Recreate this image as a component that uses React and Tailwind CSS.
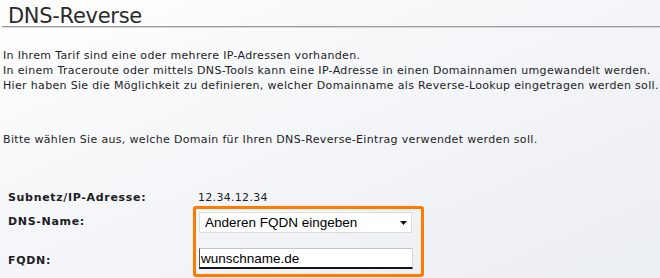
import React from "react";

export default function App() {
  return (
    <div className="w-[660px] h-[278px] overflow-hidden bg-linear-to-br from-white via-[#f4f5f8] to-[#eaedf2] text-[#1c1c24] font-['DejaVu_Sans',Verdana,sans-serif]">
      <div className="h-[26px] pl-[8px] pt-[5px] text-[21px] leading-[22px] text-[#2a2a2a] tracking-[-0.3px]">
        DNS-Reverse
      </div>
      <div className="ml-[2px] h-[1px] bg-[#9a9a9a]" />
      <div className="h-[1px] ml-[2px] bg-[#d6d8dc]" />

      <div className="mt-[20px] pl-[3px] text-[11px] leading-[15px] tracking-[0.33px] whitespace-nowrap">
        <div>In Ihrem Tarif sind eine oder mehrere IP-Adressen vorhanden.</div>
        <div>In einem Traceroute oder mittels DNS-Tools kann eine IP-Adresse in einen Domainnamen umgewandelt werden.</div>
        <div>Hier haben Sie die Möglichkeit zu definieren, welcher Domainname als Reverse-Lookup eingetragen werden soll.</div>
      </div>

      <div className="mt-[39px] pl-[3px] text-[11px] leading-[15px] tracking-[0.33px] whitespace-nowrap">
        Bitte wählen Sie aus, welche Domain für Ihren DNS-Reverse-Eintrag verwendet werden soll.
      </div>

      <div className="mt-[43px] flex text-[11px] leading-[15px]">
        <div className="w-[193px] pl-[8px] font-bold tracking-[0.68px] whitespace-nowrap">Subnetz/IP-Adresse:</div>
        <div className="pl-[5px] tracking-[0.3px]">12.34.12.34</div>
      </div>

      <div className="mt-[1px] flex text-[11px] leading-[15px]">
        <div className="w-[193px] pl-[8px] font-bold tracking-[0.68px]">
          <div className="pt-[8px]">DNS-Name:</div>
          <div className="mt-[24px]">FQDN:</div>
        </div>
        <div className="w-[231px] h-[71px] rounded-[3px] border-[3px] border-[#ff7b00] pl-[3px] pr-[9px] pt-[3px] flex flex-col font-['Liberation_Sans',Arial,sans-serif] text-[13.5px] text-black">
          <div className="h-[21px] w-[213px] flex items-center bg-white border border-[#dcdcdc] pl-[5px] pr-[4px] pt-[1px]">
            <span className="leading-[16px]">Anderen FQDN eingeben</span>
            <svg className="ml-auto" width="7" height="4" viewBox="0 0 7 4">
              <path d="M0 0 H7 L3.5 4 Z" fill="#111" />
            </svg>
          </div>
          <div className="mt-[15px] h-[21px] w-[214px] flex items-center bg-white border-t border-t-[#c4c4c4] border-l border-l-[#555] border-r border-r-[#d4d4d4] border-b-2 border-b-[#151515] pl-[1px] pt-[2px]">
            <span className="leading-[16px]">wunschname.de</span>
          </div>
        </div>
      </div>
    </div>
  );
}
